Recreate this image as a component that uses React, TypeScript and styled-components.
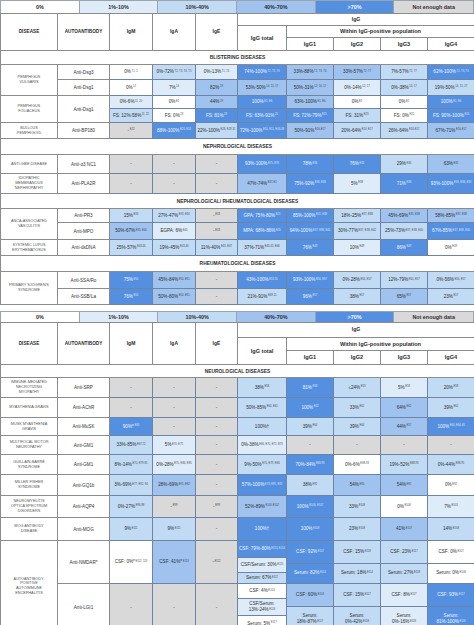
import React from "react";
import styled, { createGlobalStyle } from "styled-components";

type Shade = "w" | "v" | "l" | "m" | "s" | "g";
const BG: Record<Shade, string> = {
  w: "#ffffff",
  v: "#deecf9",
  l: "#c2dbf4",
  m: "#9fc3ee",
  s: "#5590e0",
  g: "#d9d9d9",
};
const FG = (c: Shade) => (c === "s" ? "#f2f6ff" : "#2e2e2e");

type V = { t: string; r: string; c: Shade };
type SplitCell = { parts: { v: V; f: number }[] };
type Cell = V | SplitCell;
type DataRow = {
  kind: "data";
  h: number;
  disease?: [string, number];
  ab?: [string, number];
  cells: Cell[];
};
type SectionRow = { kind: "section"; h: number; title: string };
type Row = DataRow | SectionRow;

const v = (t: string, r: string, c: Shade): V => ({ t, r, c });
const G: V = v("-", "", "g");
const split = (...parts: [V, number][]): SplitCell => ({
  parts: parts.map(([pv, f]) => ({ v: pv, f })),
});
const isSplit = (c: Cell): c is SplitCell => (c as SplitCell).parts !== undefined;

const topRows: Row[] = [
  { kind: "section", h: 14, title: "BLISTERING DISEASES" },
  {
    kind: "data", h: 15, disease: ["Pemphigus\nvulgaris", 2], ab: ["Anti-Dsg3", 1],
    cells: [
      v("0%", "T1, 2", "w"), v("0%-72%", "T2, T3, T4, T5", "l"), v("0%-13%", "T1, T4", "v"),
      v("74%-100%", "T2, T3, T6", "s"), v("33%-88%", "T2, T3, T4", "m"),
      v("33%-57%", "T2, T7", "m"), v("7%-57%", "T2, T7", "l"), v("62%-100%", "T2, T3, T4", "s"),
    ],
  },
  {
    kind: "data", h: 16, ab: ["Anti-Dsg1", 1],
    cells: [
      v("0%", "12", "w"), v("7%", "14", "v"), v("82%", "19", "m"), v("53%-50%", "14, 15, 17", "m"),
      v("50%-31%", "12, 16, 17", "m"), v("0%-14%", "12, 17", "v"), v("0%-38%", "14, 17", "l"),
      v("19%-50%", "14, 15, 17", "l"),
    ],
  },
  {
    kind: "data", h: 13, disease: ["Pemphigus\nfoliaceus", 2], ab: ["Anti-Dsg1", 2],
    cells: [
      v("0%-6%", "11, 20", "v"), v("0%", "E2", "w"), v("44%", "19", "m"), v("100%", "E1, E6", "s"),
      v("63%-100%", "E1, E6", "m"), v("0%", "E2", "w"), v("0%", "E2", "w"), v("100%", "E1, E6", "s"),
    ],
  },
  {
    kind: "data", h: 14,
    cells: [
      v("FS: 12%-58%", "11, 22", "l"), v("FS: 0%", "23", "w"), v("FS: 81%", "19", "s"),
      v("FS: 63%-91%", "25", "s"), v("FS: 72%-79%", "E21", "s"), v("FS: 31%", "E23", "l"),
      v("FS: 0%", "E21", "w"), v("FS: 90%-100%", "E24", "s"),
    ],
  },
  {
    kind: "data", h: 16, disease: ["Bullous\npemphigoid", 1], ab: ["Anti-BP180", 1],
    cells: [
      v("-", "E22", "g"), v("88%-100%", "E23, E24", "s"), v("22%-100%", "E28, E29-31", "l"),
      v("72%-100%", "E10, E11, E06-08", "s"), v("50%-91%", "E16-E17", "m"),
      v("20%-64%", "E20, E17", "l"), v("26%-64%", "E16-E17", "l"), v("67%-71%", "E16-E17", "m"),
    ],
  },
  { kind: "section", h: 16, title: "NEPHROLOGICAL DISEASES" },
  {
    kind: "data", h: 19, disease: ["Anti-GBM disease", 1], ab: ["Anti-α3 NC1", 1],
    cells: [G, G, G, v("93%-100%", "E75, E76", "s"), v("78%", "E36", "s"), v("76%", "E35", "s"),
      v("29%", "E36", "l"), v("63%", "E35", "m")],
  },
  {
    kind: "data", h: 20, disease: ["Idiopathic\nmembranous\nnephropathy", 1], ab: ["Anti-PLA2R", 1],
    cells: [G, G, G, v("47%-74%", "E37-E1", "m"), v("75%-92%", "E36, E38", "s"), v("5%", "E38", "v"),
      v("71%", "E38", "s"), v("93%-100%", "E36, E38, E33", "s")],
  },
  { kind: "section", h: 15, title: "NEPHROLOGICAL/ RHEUMATOLOGICAL DISEASES" },
  {
    kind: "data", h: 14, disease: ["ANCA-associated\nvasculitis", 2], ab: ["Anti-PR3", 1],
    cells: [
      v("15%", "E33", "l"), v("27%-47%", "E33, E34", "l"), v("-", "E33", "g"), v("GPA: 75%-80%", "E21", "s"),
      v("85%-100%", "E31, E38", "s"), v("18%-25%", "E37, E38", "l"), v("45%-69%", "E35, E38", "m"),
      v("58%-85%", "E37, E38", "m"),
    ],
  },
  {
    kind: "data", h: 17, ab: ["Anti-MPO", 1],
    cells: [
      v("50%-67%", "E35, E40", "m"), v("EGPA: 6%", "E45", "v"), v("-", "E33", "g"),
      v("MPA: 68%-86%", "E35", "s"), v("94%-100%", "E37, E38, E40", "s"), v("30%-77%", "E37, E38, E42", "l"),
      v("25%-73%", "E37, E38, E40", "l"), v("67%-85%", "E37, E38, E40", "s"),
    ],
  },
  {
    kind: "data", h: 16, disease: ["Systemic lupus\nerythematosus", 1], ab: ["Anti-dsDNA", 1],
    cells: [
      v("25%-57%", "E43-46", "l"), v("19%-45%", "E43-46", "l"),
      v("11%-40%", "E45, E47", "l"), v("37%-71%", "E43-45, E46", "l"), v("76%", "E49", "s"),
      v("10%", "E49", "v"), v("86%", "E49", "s"), v("0%", "E49", "w"),
    ],
  },
  { kind: "section", h: 16, title: "RHEUMATOLOGICAL DISEASES" },
  {
    kind: "data", h: 17, disease: ["Primary Sjögren's\nsyndrome", 2], ab: ["Anti-SSA/Ro", 1],
    cells: [
      v("75%", "E50", "s"), v("45%-84%", "E50, E51", "m"), G, v("43%-100%", "E53-55", "s"),
      v("93%-100%", "E56, E57", "s"), v("0%-28%", "E56, E57", "l"), v("12%-79%", "E56, E57", "l"),
      v("0%-56%", "E56, E57", "l"),
    ],
  },
  {
    kind: "data", h: 16, ab: ["Anti-SSB/La", 1],
    cells: [
      v("76%", "E50", "s"), v("50%-80%", "E50, E51", "m"), G, v("21%-91%", "E49-11", "l"),
      v("96%", "E57", "s"), v("38%", "E57", "l"), v("65%", "E57", "m"), v("23%", "E57", "l"),
    ],
  },
];

const bottomRows: Row[] = [
  { kind: "section", h: 13, title: "NEUROLOGICAL DISEASES" },
  {
    kind: "data", h: 20, disease: ["Immune-mediated\nnecrotizing\nmyopathy", 1], ab: ["Anti-SRP", 1],
    cells: [G, G, G, v("38%", "E58", "l"), v("81%", "E58", "s"), v("≤24%", "E59", "l"),
      v("5%", "E58", "v"), v("20%", "E58", "l")],
  },
  {
    kind: "data", h: 20, disease: ["Myasthenia gravis", 1], ab: ["Anti-AChR", 1],
    cells: [G, G, G, v("50%-85%", "E60, E61", "l"), v("100%", "E62", "s"), v("33%", "E62", "l"),
      v("64%", "E62", "m"), v("39%", "E62", "l")],
  },
  {
    kind: "data", h: 18, disease: ["MuSK myasthenia\ngravis", 1], ab: ["Anti-MuSK", 1],
    cells: [v("90%*", "E63", "s"), G, G, v("100%†", "", "l"), v("39%", "E64", "l"), v("39%", "E64", "l"),
      v("44%", "E57", "m"), v("100%", "E60, E64-65", "s")],
  },
  {
    kind: "data", h: 19, disease: ["Multifocal motor\nneuropathy", 1], ab: ["Anti-GM1", 1],
    cells: [v("33%-85%", "E67-72", "l"), v("5%", "E70, E71", "v"), G,
      v("0%-38%", "E66, E70, E71, E73", "v"), G, G, G, G],
  },
  {
    kind: "data", h: 20, disease: ["Guillain-Barré\nsyndrome", 1], ab: ["Anti-GM1", 1],
    cells: [
      v("8%-14%", "E70, E79-81", "l"), v("0%-28%", "E70, E84, E85", "v"), G,
      v("9%-50%", "E70, E79, E86", "l"), v("70%-84%", "E88-93", "s"),
      v("0%-6%", "E88-93", "w"), v("19%-52%", "E88-93", "l"), v("0%-44%", "E88-95", "l"),
    ],
  },
  {
    kind: "data", h: 21, disease: ["Miller Fisher\nsyndrome", 1], ab: ["Anti-GQ1b", 1],
    cells: [
      v("3%-69%", "E77, E92, 94", "l"), v("28%-69%", "E91, E92", "m"), G,
      v("57%-100%", "E73, E91, E92", "s"), v("38%", "E92", "l"), v("54%", "E90", "m"),
      v("54%", "E92", "m"), v("0%", "E92", "w"),
    ],
  },
  {
    kind: "data", h: 22, disease: ["Neuromyelitis\noptica spectrum\ndisorders", 1], ab: ["Anti-AQP4", 1],
    cells: [
      v("0%-27%", "E96-98", "l"), v("-", "E99", "g"), v("-", "E99", "g"), v("52%-89%", "E100-E102", "m"),
      v("100%", "E106, E107", "s"), v("33%", "E108", "l"), v("0%", "E108", "w"), v("7%", "E103", "v"),
    ],
  },
  {
    kind: "data", h: 23, disease: ["MOG antibody\ndisease", 1], ab: ["Anti-MOG", 1],
    cells: [
      v("9%", "E111", "l"), v("9%", "E111", "l"), G, v("100%†", "", "s"), v("100%", "E108", "s"),
      v("23%", "E108", "l"), v("41%", "E107", "m"), v("14%", "E108", "l"),
    ],
  },
  {
    kind: "data", h: 43, disease: ["Autoantibody-\npositive\nautoimmune\nencephalitis", 2], ab: ["Anti-NMDAR*", 1],
    cells: [
      v("CSF: 0%*", "E112, 113", "w"), v("CSF: 41%*", "E113", "m"), v("-", "E112", "g"),
      split([v("CSF: 79%-80%", "E113, E114", "s"), 17], [v("CSF/Serum: 30%", "E115", "v"), 15], [v("Serum: 67%", "E112", "l"), 11]),
      split([v("CSF: 92%", "E107", "s"), 23], [v("Serum: 82%", "E114", "s"), 20]),
      split([v("CSF: 15%", "E118", "l"), 23], [v("Serum: 18%", "E114", "l"), 20]),
      split([v("CSF: 23%", "E117", "l"), 23], [v("Serum: 27%", "E118", "l"), 20]),
      split([v("CSF: 0%", "E107", "w"), 23], [v("Serum: 0%", "E108", "w"), 20]),
    ],
  },
  {
    kind: "data", h: 48, ab: ["Anti-LGI1", 1],
    cells: [
      G, G, G,
      split([v("CSF: 4%", "E103", "w"), 15], [v("CSF/Serum:\n13%-24%", "E116", "v"), 17], [v("Serum: 5%", "E117", "w"), 16]),
      split([v("CSF: 60%", "E103", "m"), 23], [v("Serum:\n18%-87%", "E117", "l"), 25]),
      split([v("CSF: 15%", "E117", "l"), 23], [v("Serum:\n0%-42%", "E118", "l"), 25]),
      split([v("CSF: 8%", "E117", "v"), 23], [v("Serum:\n0%-16%", "E118", "v"), 25]),
      split([v("CSF: 93%", "E117", "s"), 23], [v("Serum:\n81%-100%", "E118", "s"), 25]),
    ],
  },
];

const GlobalStyle = createGlobalStyle`
  html, body { margin: 0; padding: 0; background: #ffffff; }
  body {
    width: 474px;
    overflow: hidden;
    font-family: "Liberation Sans", Arial, sans-serif;
    -webkit-font-smoothing: antialiased;
  }
`;

const Page = styled.div`
  width: 474px;
  display: flex;
  flex-direction: column;
  gap: 6px;
`;

const Block = styled.section`
  display: flex;
  flex-direction: column;
`;

const Legend = styled.div<{ $h: number }>`
  display: grid;
  grid-template-columns: repeat(6, 1fr);
  height: ${(p) => p.$h}px;
  border: 1px solid #9aa3ae;
  border-bottom: none;
  box-sizing: border-box;
`;

const LegendCell = styled.div<{ $c: Shade }>`
  background: ${(p) => BG[p.$c]};
  color: ${(p) => FG(p.$c)};
  border-right: 1px solid #9aa3ae;
  display: flex;
  align-items: center;
  justify-content: center;
  font-size: 5.4px;
  font-weight: 700;
  &:last-child { border-right: none; }
`;

const Table = styled.table`
  width: 474px;
  table-layout: fixed;
  border-collapse: collapse;
  border: 1.5px solid #8c8c8c;
`;

const Tr = styled.tr<{ $h: number }>`
  height: ${(p) => p.$h}px;
`;

const Th = styled.th<{ $size: number }>`
  background: #ffffff;
  color: #2b2b2b;
  border: 1px solid #8c8c8c;
  font-size: ${(p) => p.$size}px;
  font-weight: 700;
  text-align: center;
  vertical-align: middle;
  padding: 0;
  line-height: 1.1;
`;

const SectionTd = styled.td`
  background: #ffffff;
  border-top: 1px solid #8c8c8c;
  border-bottom: 1px solid #8c8c8c;
  color: #2b2b2b;
  font-size: 4.9px;
  font-weight: 700;
  text-align: center;
  vertical-align: middle;
  padding: 0;
`;

const DiseaseTd = styled.td`
  background: #ffffff;
  border: 1px solid #8c8c8c;
  color: #555555;
  font-size: 3.8px;
  text-transform: uppercase;
  white-space: pre-line;
  text-align: center;
  vertical-align: middle;
  padding: 0 2px;
  line-height: 1.25;
`;

const AbTd = styled.td`
  background: #ffffff;
  border: 1px solid #8c8c8c;
  color: #333333;
  font-size: 4.6px;
  text-align: center;
  vertical-align: middle;
  padding: 0 1px;
`;

const ValTd = styled.td<{ $c: Shade }>`
  background: ${(p) => BG[p.$c]};
  color: ${(p) => FG(p.$c)};
  border: 1px solid #6d84a4;
  font-size: 4.6px;
  line-height: 1.25;
  text-align: center;
  vertical-align: middle;
  padding: 0 1px;
  overflow: hidden;
`;

const SplitTd = styled.td`
  border: 1px solid #6d84a4;
  padding: 0;
  vertical-align: top;
`;

const Stack = styled.div<{ $h: number }>`
  display: flex;
  flex-direction: column;
  height: ${(p) => p.$h}px;
`;

const SubBox = styled.div<{ $c: Shade; $f: number }>`
  flex: ${(p) => p.$f} 1 0;
  min-height: 0;
  overflow: hidden;
  background: ${(p) => BG[p.$c]};
  color: ${(p) => FG(p.$c)};
  border-top: 1px solid #6d84a4;
  display: flex;
  align-items: center;
  justify-content: center;
  text-align: center;
  white-space: pre-line;
  font-size: 4.6px;
  line-height: 1.3;
  padding: 0 1px;
  &:first-child { border-top: none; }
`;

const Ref = styled.span`
  font-size: 2.7px;
  vertical-align: 1.2px;
  margin-left: 0.6px;
  opacity: 0.85;
`;

const widths = [57, 52, 43, 43, 42, 49, 47, 47, 47, 47];
const legendItems: [string, Shade][] = [
  ["0%", "w"], ["1%-10%", "v"], ["10%-40%", "l"], ["40%-70%", "m"], [">70%", "s"], ["Not enough data", "g"],
];

const Value: React.FC<{ val: V }> = ({ val }) => (
  <>
    {val.t}
    {val.r && <Ref>{val.r}</Ref>}
  </>
);

const Header: React.FC<{ hs: [number, number, number] }> = ({ hs }) => (
  <thead>
    <Tr $h={hs[0]}>
      <Th $size={4.7} rowSpan={3}>DISEASE</Th>
      <Th $size={4.7} rowSpan={3}>AUTOANTIBODY</Th>
      <Th $size={5} rowSpan={3}>IgM</Th>
      <Th $size={5} rowSpan={3}>IgA</Th>
      <Th $size={5} rowSpan={3}>IgE</Th>
      <Th $size={5.2} colSpan={5}>IgG</Th>
    </Tr>
    <Tr $h={hs[1]}>
      <Th $size={5.6} rowSpan={2}>IgG total</Th>
      <Th $size={5.6} colSpan={4}>Within IgG-positive population</Th>
    </Tr>
    <Tr $h={hs[2]}>
      <Th $size={5.6}>IgG1</Th>
      <Th $size={5.6}>IgG2</Th>
      <Th $size={5.6}>IgG3</Th>
      <Th $size={5.6}>IgG4</Th>
    </Tr>
  </thead>
);

const Body: React.FC<{ rows: Row[] }> = ({ rows }) => (
  <tbody>
    {rows.map((row, i) =>
      row.kind === "section" ? (
        <Tr key={i} $h={row.h}>
          <SectionTd colSpan={10}>{row.title}</SectionTd>
        </Tr>
      ) : (
        <Tr key={i} $h={row.h}>
          {row.disease && <DiseaseTd rowSpan={row.disease[1]}>{row.disease[0]}</DiseaseTd>}
          {row.ab && <AbTd rowSpan={row.ab[1]}>{row.ab[0]}</AbTd>}
          {row.cells.map((c, j) =>
            isSplit(c) ? (
              <SplitTd key={j}>
                <Stack $h={row.h - 1}>
                  {c.parts.map((p, k) => (
                    <SubBox key={k} $c={p.v.c} $f={p.f}>
                      <span><Value val={p.v} /></span>
                    </SubBox>
                  ))}
                </Stack>
              </SplitTd>
            ) : (
              <ValTd key={j} $c={c.c}>
                <Value val={c} />
              </ValTd>
            )
          )}
        </Tr>
      )
    )}
  </tbody>
);

const DataTable: React.FC<{ legendH: number; hs: [number, number, number]; rows: Row[] }> = ({ legendH, hs, rows }) => (
  <Block>
    <Legend $h={legendH}>
      {legendItems.map(([t, c]) => (
        <LegendCell key={t} $c={c}>{t}</LegendCell>
      ))}
    </Legend>
    <Table>
      <colgroup>
        {widths.map((w, i) => (
          <col key={i} style={{ width: w }} />
        ))}
      </colgroup>
      <Header hs={hs} />
      <Body rows={rows} />
    </Table>
  </Block>
);

export default function App() {
  return (
    <>
      <GlobalStyle />
      <Page>
        <DataTable legendH={13} hs={[12, 12, 13]} rows={topRows} />
        <DataTable legendH={11} hs={[15, 13, 14]} rows={bottomRows} />
      </Page>
    </>
  );
}
